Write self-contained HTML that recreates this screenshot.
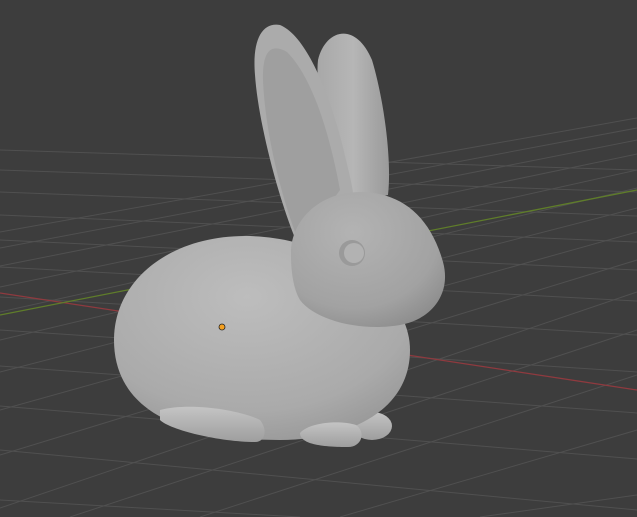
<!DOCTYPE html><html><head><style>html,body{margin:0;padding:0;background:#3d3d3d;overflow:hidden;width:637px;height:517px}svg{display:block;overflow:hidden}</style></head><body>
<svg width="637" height="517" viewBox="0 0 637 517" xmlns="http://www.w3.org/2000/svg">
<defs>
<clipPath id="c"><rect width="637" height="517"/></clipPath>
<radialGradient id="bg" cx="0.45" cy="0.3" r="0.8"><stop offset="0" stop-color="#bdbdbd"/><stop offset="0.7" stop-color="#aaaaaa"/><stop offset="1" stop-color="#939393"/></radialGradient>
<radialGradient id="hd" cx="0.4" cy="0.3" r="0.8"><stop offset="0" stop-color="#b3b3b3"/><stop offset="0.7" stop-color="#a2a2a2"/><stop offset="1" stop-color="#8a8a8a"/></radialGradient>
<linearGradient id="ea" x1="0" y1="0" x2="1" y2="0"><stop offset="0" stop-color="#a8a8a8"/><stop offset="0.5" stop-color="#b6b6b6"/><stop offset="1" stop-color="#9a9a9a"/></linearGradient>
<linearGradient id="ft" x1="0" y1="0" x2="0" y2="1"><stop offset="0" stop-color="#c4c4c4"/><stop offset="1" stop-color="#9e9e9e"/></linearGradient>
</defs>
<g clip-path="url(#c)">
<rect width="637" height="517" fill="#3d3d3d"/>
<g stroke="#505050" stroke-width="1" fill="none">
<path d="M0 150 L637 170 M0 170 L637 192 M0 192 L637 216 M0 215 L637 242 M0 240 L637 270 M0 267 L637 301 M0 297 L637 335 M0 330 L637 372 M0 366 L637 413 M0 406 L637 459 M0 450 L637 510 M0 500 L300 517"/>
<path d="M0 232 L637 118 M0 248 L637 128 M0 266 L637 140 M0 287 L637 154 M0 312 L637 170 M0 340 L637 188 M0 372 L637 208 M0 410 L637 232 M0 455 L637 260 M0 508 L637 292 M70 517 L637 330 M200 517 L637 375 M340 517 L637 430 M480 517 L637 495"/>
</g>
<line x1="0" y1="293" x2="637" y2="390" stroke="#8f3a3f" stroke-width="1.3"/>
<line x1="0" y1="315" x2="637" y2="190" stroke="#5f7d2a" stroke-width="1.3"/>
<path d="M318 60 C325 30 355 20 372 60 C384 100 392 160 388 195 L352 200 C335 150 314 95 318 60Z" fill="url(#ea)"/>
<path d="M255 75 C252 40 262 22 280 25 C305 35 330 90 346 160 C352 185 356 200 352 212 L300 250 C278 200 258 120 255 75Z" fill="#ababab"/>
<path d="M263 80 C262 45 275 45 287 52 C310 75 328 125 340 190 L300 245 C280 195 265 130 263 80Z" fill="#9f9f9f"/>
<ellipse cx="372" cy="426" rx="20" ry="14" fill="url(#ft)"/>
<path d="M114 340 C114 280 170 236 245 236 C330 236 410 290 410 350 C410 410 350 440 280 440 C180 440 114 410 114 340Z" fill="url(#bg)"/>
<path d="M160 410 C190 402 240 410 260 420 C268 430 265 442 255 442 C220 442 170 430 160 420Z" fill="url(#ft)"/>
<path d="M300 433 C310 422 340 420 356 425 C366 432 362 447 348 447 C325 447 300 445 300 433Z" fill="url(#ft)"/>
<path d="M291 255 C290 220 320 192 360 192 C400 192 430 215 443 262 C452 295 430 320 400 325 C360 332 315 320 300 300 C293 288 291 270 291 255Z" fill="url(#hd)"/>
<circle cx="352" cy="253" r="13" fill="#9a9a9a"/>
<circle cx="354" cy="253" r="10" fill="#b2b2b2"/>
<circle cx="222" cy="327" r="3" fill="#f5a020" stroke="#222" stroke-width="0.8"/>
</g>
</svg>
</body></html>
